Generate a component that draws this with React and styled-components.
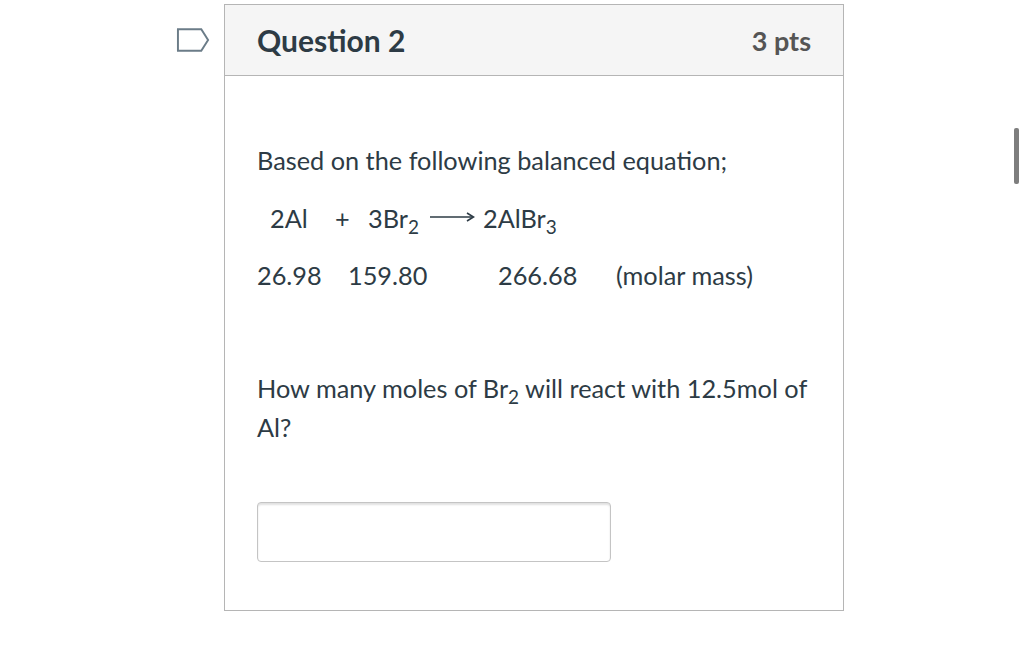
import React from "react";
import styled, { createGlobalStyle } from "styled-components";

const GlobalStyle = createGlobalStyle`
  html, body {
    margin: 0;
    padding: 0;
    background: #fff;
  }
  body {
    font-family: Lato, "Open Sans", sans-serif;
    color: #2d3b45;
  }
`;

const Page = styled.div`
  position: relative;
  width: 1024px;
  height: 655px;
  display: flex;
  align-items: flex-start;
  padding: 4px 0 0 176px;
  box-sizing: border-box;
  gap: 13px;
`;

const FlagCol = styled.div`
  padding-top: 23px;
  width: 35px;
  display: flex;
  justify-content: flex-start;
`;

const Card = styled.div`
  width: 620px;
  height: 607px;
  border: 1px solid #b5b5b5;
  box-sizing: border-box;
  display: flex;
  flex-direction: column;
`;

const Header = styled.div`
  height: 71px;
  background: #f5f5f5;
  border-bottom: 1px solid #b5b5b5;
  display: flex;
  align-items: center;
  justify-content: space-between;
  padding: 0 32px 0 32px;
  box-sizing: border-box;
`;

const Title = styled.div`
  font-size: 30px;
  font-weight: 700;
  color: #2d3b45;
`;

const Points = styled.div`
  font-size: 27px;
  font-weight: 700;
  color: #555;
`;

const Body = styled.div`
  padding: 65px 18px 0 32px;
  font-size: 25.3px;
  line-height: 39px;
`;

const Para = styled.p`
  margin: 0;
`;

const Question = styled.p`
  margin: 65px 0 0 0;
`;

const EqTable = styled.div`
  margin-top: 10px;
`;

const EqRow = styled.div`
  display: flex;
  align-items: baseline;
  height: 57px;
  line-height: 57px;
`;

const Cell = styled.span`
  width: ${(p) => p.w}px;
  flex: none;
  white-space: nowrap;
`;

const Sub = styled.sub`
  font-size: 0.75em;
  vertical-align: -0.3em;
  line-height: 1;
`;

const AnswerBox = styled.input`
  display: block;
  width: 354px;
  height: 60px;
  box-sizing: border-box;
  border: 1px solid #c4c4c4;
  border-radius: 4px;
  box-shadow: inset 0 2px 2px rgba(0, 0, 0, 0.12);
  margin-top: 55px;
  font-size: 20px;
  padding: 0 10px;
  outline: none;
`;

const Scrollbar = styled.div`
  position: absolute;
  left: 1014px;
  top: 128px;
  width: 5px;
  height: 56px;
  border-radius: 2px;
  background: #7e7e7e;
`;

const FlagIcon = () => (
  <svg width="36" height="26" viewBox="0 0 36 26">
    <path
      d="M2 2 H26 L33 13 L26 24 H2 Z"
      fill="none"
      stroke="#6b7c88"
      strokeWidth="2"
    />
  </svg>
);

const LongArrow = () => (
  <svg width="46" height="12" viewBox="0 0 46 12" style={{ verticalAlign: "0.2em" }}>
    <path d="M1 6 H44" stroke="#2d3b45" strokeWidth="1.6" />
    <path d="M38 2 L44.5 6 L38 10" fill="none" stroke="#2d3b45" strokeWidth="1.6" />
  </svg>
);

export default function App() {
  return (
    <>
      <GlobalStyle />
      <Page>
        <FlagCol>
          <FlagIcon />
        </FlagCol>
        <Card>
          <Header>
            <Title>Question 2</Title>
            <Points>3 pts</Points>
          </Header>
          <Body>
            <Para>Based on the following balanced equation;</Para>
            <EqTable>
              <EqRow>
                <Cell w={13} />
                <Cell w={65}>2Al</Cell>
                <Cell w={33}>+</Cell>
                <Cell w={61}>
                  3Br<Sub>2</Sub>
                </Cell>
                <Cell w={54}>
                  <LongArrow />
                </Cell>
                <Cell w={100}>
                  2AlBr<Sub>3</Sub>
                </Cell>
              </EqRow>
              <EqRow>
                <Cell w={91}>26.98</Cell>
                <Cell w={150}>159.80</Cell>
                <Cell w={118}>266.68</Cell>
                <Cell w={160}>(molar mass)</Cell>
              </EqRow>
            </EqTable>
            <Question>
              How many moles of Br<Sub>2</Sub> will react with 12.5mol of Al?
            </Question>
            <AnswerBox type="text" aria-label="answer" />
          </Body>
        </Card>
        <Scrollbar />
      </Page>
    </>
  );
}
